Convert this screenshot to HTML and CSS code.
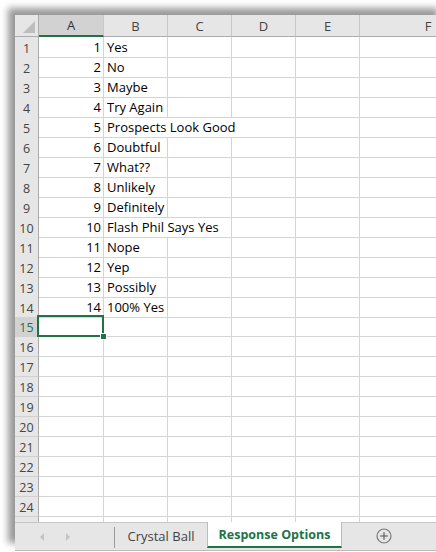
FILE: index.html
```html
<!DOCTYPE html>
<html>
<head>
<meta charset="utf-8">
<link rel="stylesheet" href="styles.css">
</head>
<body>
<div class="window">
  <div class="grid">
    <div class="row head">
      <div class="corner"><span class="tri"></span></div>
      <div class="ch selc">A</div>
      <div class="ch">B</div>
      <div class="ch">C</div>
      <div class="ch">D</div>
      <div class="ch">E</div>
      <div class="ch wide">F</div>
    </div>
    <div class="row"><div class="rh">1</div><div class="c num">1</div><div class="c">Yes</div><div class="c"></div><div class="c"></div><div class="c"></div><div class="c wide"></div></div>
    <div class="row"><div class="rh">2</div><div class="c num">2</div><div class="c">No</div><div class="c"></div><div class="c"></div><div class="c"></div><div class="c wide"></div></div>
    <div class="row"><div class="rh">3</div><div class="c num">3</div><div class="c">Maybe</div><div class="c"></div><div class="c"></div><div class="c"></div><div class="c wide"></div></div>
    <div class="row"><div class="rh">4</div><div class="c num">4</div><div class="c">Try Again</div><div class="c"></div><div class="c"></div><div class="c"></div><div class="c wide"></div></div>
    <div class="row"><div class="rh">5</div><div class="c num">5</div><div class="c nb">Prospects Look Good</div><div class="c nb"></div><div class="c"></div><div class="c"></div><div class="c wide"></div></div>
    <div class="row"><div class="rh">6</div><div class="c num">6</div><div class="c">Doubtful</div><div class="c"></div><div class="c"></div><div class="c"></div><div class="c wide"></div></div>
    <div class="row"><div class="rh">7</div><div class="c num">7</div><div class="c">What??</div><div class="c"></div><div class="c"></div><div class="c"></div><div class="c wide"></div></div>
    <div class="row"><div class="rh">8</div><div class="c num">8</div><div class="c">Unlikely</div><div class="c"></div><div class="c"></div><div class="c"></div><div class="c wide"></div></div>
    <div class="row"><div class="rh">9</div><div class="c num">9</div><div class="c">Definitely</div><div class="c"></div><div class="c"></div><div class="c"></div><div class="c wide"></div></div>
    <div class="row"><div class="rh">10</div><div class="c num">10</div><div class="c nb">Flash Phil Says Yes</div><div class="c"></div><div class="c"></div><div class="c"></div><div class="c wide"></div></div>
    <div class="row"><div class="rh">11</div><div class="c num">11</div><div class="c">Nope</div><div class="c"></div><div class="c"></div><div class="c"></div><div class="c wide"></div></div>
    <div class="row"><div class="rh">12</div><div class="c num">12</div><div class="c">Yep</div><div class="c"></div><div class="c"></div><div class="c"></div><div class="c wide"></div></div>
    <div class="row"><div class="rh">13</div><div class="c num">13</div><div class="c">Possibly</div><div class="c"></div><div class="c"></div><div class="c"></div><div class="c wide"></div></div>
    <div class="row"><div class="rh">14</div><div class="c num">14</div><div class="c">100% Yes</div><div class="c"></div><div class="c"></div><div class="c"></div><div class="c wide"></div></div>
    <div class="row"><div class="rh selr">15</div><div class="c num sel"></div><div class="c"></div><div class="c"></div><div class="c"></div><div class="c"></div><div class="c wide"></div></div>
    <div class="row"><div class="rh">16</div><div class="c"></div><div class="c"></div><div class="c"></div><div class="c"></div><div class="c"></div><div class="c wide"></div></div>
    <div class="row"><div class="rh">17</div><div class="c"></div><div class="c"></div><div class="c"></div><div class="c"></div><div class="c"></div><div class="c wide"></div></div>
    <div class="row"><div class="rh">18</div><div class="c"></div><div class="c"></div><div class="c"></div><div class="c"></div><div class="c"></div><div class="c wide"></div></div>
    <div class="row"><div class="rh">19</div><div class="c"></div><div class="c"></div><div class="c"></div><div class="c"></div><div class="c"></div><div class="c wide"></div></div>
    <div class="row"><div class="rh">20</div><div class="c"></div><div class="c"></div><div class="c"></div><div class="c"></div><div class="c"></div><div class="c wide"></div></div>
    <div class="row"><div class="rh">21</div><div class="c"></div><div class="c"></div><div class="c"></div><div class="c"></div><div class="c"></div><div class="c wide"></div></div>
    <div class="row"><div class="rh">22</div><div class="c"></div><div class="c"></div><div class="c"></div><div class="c"></div><div class="c"></div><div class="c wide"></div></div>
    <div class="row"><div class="rh">23</div><div class="c"></div><div class="c"></div><div class="c"></div><div class="c"></div><div class="c"></div><div class="c wide"></div></div>
    <div class="row"><div class="rh">24</div><div class="c"></div><div class="c"></div><div class="c"></div><div class="c"></div><div class="c"></div><div class="c wide"></div></div>
    <div class="row"><div class="rh"></div><div class="c"></div><div class="c"></div><div class="c"></div><div class="c"></div><div class="c"></div><div class="c wide"></div></div>
  </div>
  <div class="tabbar">
    <div class="nav">
      <span class="arrow left"></span>
      <span class="arrow right"></span>
    </div>
    <div class="sep"></div>
    <div class="tab">Crystal Ball</div>
    <div class="tab active">Response Options</div>
    <div class="add">
      <svg width="16" height="16" viewBox="0 0 16 16">
        <circle cx="8" cy="8" r="7" fill="none" stroke="#7a7a7a" stroke-width="1.2"/>
        <path d="M8 4.2V11.8M4.2 8H11.8" stroke="#7a7a7a" stroke-width="1.6"/>
      </svg>
    </div>
  </div>
</div>
</body>
</html>
```

FILE: styles.css
```css
html, body {
  margin: 0;
  padding: 0;
  background: #ffffff;
  width: 436px;
  height: 552px;
  overflow: hidden;
}
.window {
  margin: 15px 0 0 15px;
  width: 430px;
  height: 535px;
  background: #ffffff;
  box-shadow: -7px -7px 7px rgba(0, 0, 0, 0.4);
  display: flex;
  flex-direction: column;
}
.grid {
  height: 507px;
  overflow: hidden;
  flex: none;
}
.row {
  display: grid;
  grid-template-columns: 24px 65px 64px 64px 64px 64px 136px;
  height: 20px;
}
.row.head {
  height: 22px;
}
.rh, .ch, .corner {
  background: #e6e6e6;
  color: #444444;
  font-family: "Open Sans", "Noto Sans", sans-serif;
  font-size: 12.5px;
  display: flex;
  align-items: center;
  justify-content: center;
  box-sizing: border-box;
}
.rh {
  border-right: 1px solid #ababab;
  border-bottom: 1px solid #d0d0d0;
  padding-top: 2px;
}
.ch, .corner {
  border-right: 1px solid #c8c8c8;
  border-bottom: 1px solid #ababab;
  font-size: 13px;
}
.corner {
  position: relative;
  border-right: 1px solid #ababab;
}
.tri {
  position: absolute;
  right: 3px;
  bottom: 3px;
  width: 0;
  height: 0;
  border-left: 12px solid transparent;
  border-bottom: 12px solid #bdbdbd;
}
.ch.selc {
  background: #d2d2d2;
  border-bottom: 2px solid #217346;
  color: #333333;
}
.ch.wide {
  border-right: none;
}
.rh.selr {
  background: #d2d2d2;
  color: #217346;
}
.c {
  box-sizing: border-box;
  border-right: 1px solid #d4d4d4;
  border-bottom: 1px solid #d4d4d4;
  font-family: "Open Sans", "Noto Sans", sans-serif;
  font-size: 13px;
  color: #000000;
  white-space: nowrap;
  padding: 1px 2px 0 3px;
  line-height: 19px;
}
.c.num {
  text-align: right;
}
.c.nb {
  border-right-color: transparent;
}
.c.sel {
  position: relative;
}
.c.sel::after {
  content: "";
  position: absolute;
  left: -2px;
  top: -2px;
  right: -1px;
  bottom: -1px;
  border: 2px solid #217346;
}
.c.sel::before {
  content: "";
  position: absolute;
  right: -4px;
  bottom: -4px;
  width: 5px;
  height: 5px;
  background: #217346;
  border: 1px solid #ffffff;
  z-index: 2;
}
.tabbar {
  flex: none;
  height: 27px;
  background: #e6e6e6;
  border-top: 1px solid #c6c6c6;
  border-bottom: 1px solid #bcbcbc;
  display: flex;
  align-items: stretch;
  font-family: "Open Sans", "Noto Sans", sans-serif;
  font-size: 13px;
  color: #444444;
}
.nav {
  width: 99px;
  display: flex;
  align-items: center;
  padding-left: 25px;
  gap: 22px;
  box-sizing: border-box;
}
.arrow {
  width: 0;
  height: 0;
  border-top: 4px solid transparent;
  border-bottom: 4px solid transparent;
}
.arrow.left {
  border-right: 4px solid #c4c4c4;
}
.arrow.right {
  border-left: 4px solid #c4c4c4;
}
.sep {
  width: 1px;
  background: #9a9a9a;
  margin: 4px 0 2px 0;
}
.tab {
  width: 92px;
  display: flex;
  align-items: center;
  justify-content: center;
  padding-bottom: 2px;
  box-sizing: border-box;
}
.tab.active {
  width: 135px;
  background: #ffffff;
  color: #217346;
  font-weight: bold;
  font-size: 12.5px;
  border-left: 1px solid #bcbcbc;
  border-right: 1px solid #bcbcbc;
  border-bottom: 2px solid #217346;
  margin-top: -1px;
  margin-bottom: 2px;
  padding-bottom: 0;
}
.add {
  display: flex;
  align-items: center;
  padding-left: 34px;
  padding-bottom: 1px;
}
```
